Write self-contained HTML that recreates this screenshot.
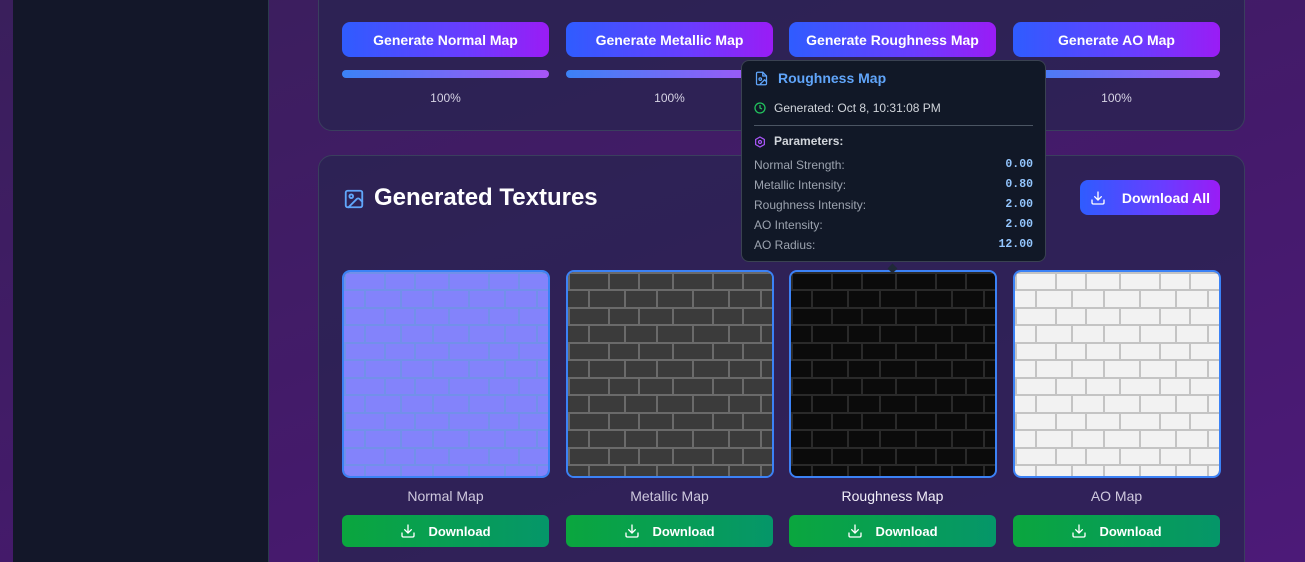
<!DOCTYPE html>
<html style="overflow:hidden;height:562px"><head><meta charset="utf-8"><style>
*{box-sizing:border-box;margin:0;padding:0}
body{width:1305px;height:562px;overflow:hidden;position:relative;font-family:"Liberation Sans",sans-serif;background:linear-gradient(160deg,#3a1f5c 0%,#451a6c 60%,#4c1a78 100%)}
.side{position:absolute;left:13px;top:0;width:256px;height:562px;background:#131729;border-right:1px solid #2b3b4d}
.card{position:absolute;left:318px;width:927px;background:rgba(40,36,80,.75);border:1px solid #3a3f5e;border-radius:14px}
.btn{position:absolute;height:35px;width:207px;border-radius:8px;background:linear-gradient(90deg,#2f5cff,#6a3cff 60%,#9a1cf5);color:#fff;font-size:14px;font-weight:bold;display:flex;align-items:center;justify-content:center}
.bar{position:absolute;height:8px;width:207px;border-radius:4px;background:linear-gradient(90deg,#3b82f6,#a855f7)}
.pct{position:absolute;width:207px;text-align:center;color:#d6d3e4;font-size:12px}
.tex{position:absolute;top:270px;width:208px;height:208px;border:2px solid #3b82f6;border-radius:8px;overflow:hidden}
.tex svg{display:block}
.lbl{position:absolute;top:488px;width:207px;text-align:center;color:#cfc9de;font-size:14px}
.dl{position:absolute;top:515px;width:207px;height:32px;border-radius:6px;background:linear-gradient(90deg,#0aa63e,#059669);color:#fff;font-size:13px;font-weight:bold;display:flex;align-items:center;justify-content:center;gap:12px}
.tip{position:absolute;left:741px;top:60px;width:305px;height:202px;background:#111827;border:1px solid #3a4252;border-radius:8px;color:#d1d5db;font-size:12px}
.row{position:absolute;left:12px;right:12px;display:flex;justify-content:space-between;color:#9ca3af;font-size:12px}
.row b{font-family:"Liberation Mono",monospace;color:#93c5fd;font-weight:bold;font-size:11.5px}
</style></head><body>
<div class="side"></div>

<div class="card" style="top:-20px;height:151px"></div>
<div class="btn" style="left:342px;top:22px">Generate Normal Map</div>
<div class="btn" style="left:566px;top:22px">Generate Metallic Map</div>
<div class="btn" style="left:789px;top:22px">Generate Roughness Map</div>
<div class="btn" style="left:1013px;top:22px">Generate AO Map</div>
<div class="bar" style="left:342px;top:70px"></div>
<div class="bar" style="left:566px;top:70px"></div>
<div class="bar" style="left:789px;top:70px"></div>
<div class="bar" style="left:1013px;top:70px"></div>
<div class="pct" style="left:342px;top:91px">100%</div>
<div class="pct" style="left:566px;top:91px">100%</div>
<div class="pct" style="left:1013px;top:91px">100%</div>

<div class="card" style="top:155px;height:400px;border-bottom-left-radius:0;border-bottom-right-radius:0;height:420px"></div>
<svg style="position:absolute;left:343px;top:188px" width="22" height="22" viewBox="0 0 24 24" fill="none" stroke="#60a5fa" stroke-width="2" stroke-linecap="round" stroke-linejoin="round"><rect x="3" y="3" width="18" height="18" rx="2"/><circle cx="9" cy="9" r="2"/><path d="M21 15l-3.1-3.1a2 2 0 0 0-2.8 0L6 21"/></svg>
<div style="position:absolute;left:374px;top:184px;color:#fff;font-size:24px;font-weight:bold">Generated Textures</div>
<div class="btn" style="left:1080px;top:180px;width:140px;gap:16px"><svg width="16" height="16" viewBox="0 0 24 24" fill="none" stroke="#fff" stroke-width="2" stroke-linecap="round" stroke-linejoin="round"><path d="M21 15v4a2 2 0 0 1-2 2H5a2 2 0 0 1-2-2v-4"/><path d="M7 10l5 5 5-5"/><path d="M12 15V3"/></svg><span>Download All</span></div>

<svg width="0" height="0" style="position:absolute"><defs>
<g id="m"><rect y="0" width="104" height="2"/><rect y="17" width="104" height="2"/>
<rect x="0" y="0" width="2" height="18"/><rect x="40" y="0" width="2" height="18"/><rect x="70" y="0" width="2" height="18"/>
<rect x="20" y="17" width="2" height="18"/><rect x="56" y="17" width="2" height="18"/><rect x="88" y="17" width="2" height="18"/></g>
<pattern id="p1" width="104" height="35" patternUnits="userSpaceOnUse"><rect width="104" height="35" fill="#8383fb"/><use href="#m" fill="#7290ea"/></pattern>
<pattern id="p2" width="104" height="35" patternUnits="userSpaceOnUse"><rect width="104" height="35" fill="#3b3b3b"/><use href="#m" fill="#6a6a6a"/></pattern>
<pattern id="p3" width="104" height="35" patternUnits="userSpaceOnUse"><rect width="104" height="35" fill="#0b0b0b"/><use href="#m" fill="#2a2a2a"/></pattern>
<pattern id="p4" width="104" height="35" patternUnits="userSpaceOnUse"><rect width="104" height="35" fill="#f2f2f2"/><use href="#m" fill="#c4c4c4"/></pattern>
</defs></svg>
<div class="tex" style="left:342px"><svg width="208" height="208"><rect width="208" height="208" fill="url(#p1)"/></svg></div>
<div class="tex" style="left:566px"><svg width="208" height="208"><rect width="208" height="208" fill="url(#p2)"/></svg></div>
<div class="tex" style="left:789px"><svg width="208" height="208"><rect width="208" height="208" fill="url(#p3)"/></svg></div>
<div class="tex" style="left:1013px"><svg width="208" height="208"><rect width="208" height="208" fill="url(#p4)"/></svg></div>
<div class="lbl" style="left:342px">Normal Map</div>
<div class="lbl" style="left:566px">Metallic Map</div>
<div class="lbl" style="left:789px;color:#f1eef8">Roughness Map</div>
<div class="lbl" style="left:1013px">AO Map</div>
<div class="dl" style="left:342px"><svg width="16" height="16" viewBox="0 0 24 24" fill="none" stroke="#fff" stroke-width="2" stroke-linecap="round" stroke-linejoin="round"><path d="M21 15v4a2 2 0 0 1-2 2H5a2 2 0 0 1-2-2v-4"/><path d="M7 10l5 5 5-5"/><path d="M12 15V3"/></svg>Download</div>
<div class="dl" style="left:566px"><svg width="16" height="16" viewBox="0 0 24 24" fill="none" stroke="#fff" stroke-width="2" stroke-linecap="round" stroke-linejoin="round"><path d="M21 15v4a2 2 0 0 1-2 2H5a2 2 0 0 1-2-2v-4"/><path d="M7 10l5 5 5-5"/><path d="M12 15V3"/></svg>Download</div>
<div class="dl" style="left:789px"><svg width="16" height="16" viewBox="0 0 24 24" fill="none" stroke="#fff" stroke-width="2" stroke-linecap="round" stroke-linejoin="round"><path d="M21 15v4a2 2 0 0 1-2 2H5a2 2 0 0 1-2-2v-4"/><path d="M7 10l5 5 5-5"/><path d="M12 15V3"/></svg>Download</div>
<div class="dl" style="left:1013px"><svg width="16" height="16" viewBox="0 0 24 24" fill="none" stroke="#fff" stroke-width="2" stroke-linecap="round" stroke-linejoin="round"><path d="M21 15v4a2 2 0 0 1-2 2H5a2 2 0 0 1-2-2v-4"/><path d="M7 10l5 5 5-5"/><path d="M12 15V3"/></svg>Download</div>

<div class="tip">
<svg style="position:absolute;left:12px;top:10px" width="15" height="15" viewBox="0 0 24 24" fill="none" stroke="#60a5fa" stroke-width="2" stroke-linecap="round" stroke-linejoin="round"><path d="M14 2H6a2 2 0 0 0-2 2v16a2 2 0 0 0 2 2h12a2 2 0 0 0 2-2V8z"/><path d="M14 2v6h6"/><circle cx="10" cy="13" r="2"/><path d="M20 17l-3-3-7 7"/></svg>
<div style="position:absolute;left:36px;top:9px;color:#60a5fa;font-size:14px;font-weight:bold">Roughness Map</div>
<svg style="position:absolute;left:12px;top:41px" width="12" height="12" viewBox="0 0 24 24" fill="none" stroke="#22c55e" stroke-width="2.5"><circle cx="12" cy="12" r="10"/><path d="M12 6v6l4 2"/></svg>
<div style="position:absolute;left:32px;top:40px">Generated: Oct 8, 10:31:08 PM</div>
<div style="position:absolute;left:12px;right:12px;top:64px;height:1px;background:#4b5563"></div>
<svg style="position:absolute;left:12px;top:75px" width="12" height="12" viewBox="0 0 24 24" fill="none" stroke="#a855f7" stroke-width="2.5"><path d="M12 2l8.7 5v10L12 22l-8.7-5V7z"/><circle cx="12" cy="12" r="3"/></svg>
<div style="position:absolute;left:32px;top:73px;font-weight:bold">Parameters:</div>
<div class="row" style="top:97px"><span>Normal Strength:</span><b>0.00</b></div>
<div class="row" style="top:117px"><span>Metallic Intensity:</span><b>0.80</b></div>
<div class="row" style="top:137px"><span>Roughness Intensity:</span><b>2.00</b></div>
<div class="row" style="top:157px"><span>AO Intensity:</span><b>2.00</b></div>
<div class="row" style="top:177px"><span>AO Radius:</span><b>12.00</b></div>
</div>
<div style="position:absolute;left:889px;top:265px;width:7px;height:7px;background:#1f2937;transform:rotate(45deg)"></div>
</body></html>
